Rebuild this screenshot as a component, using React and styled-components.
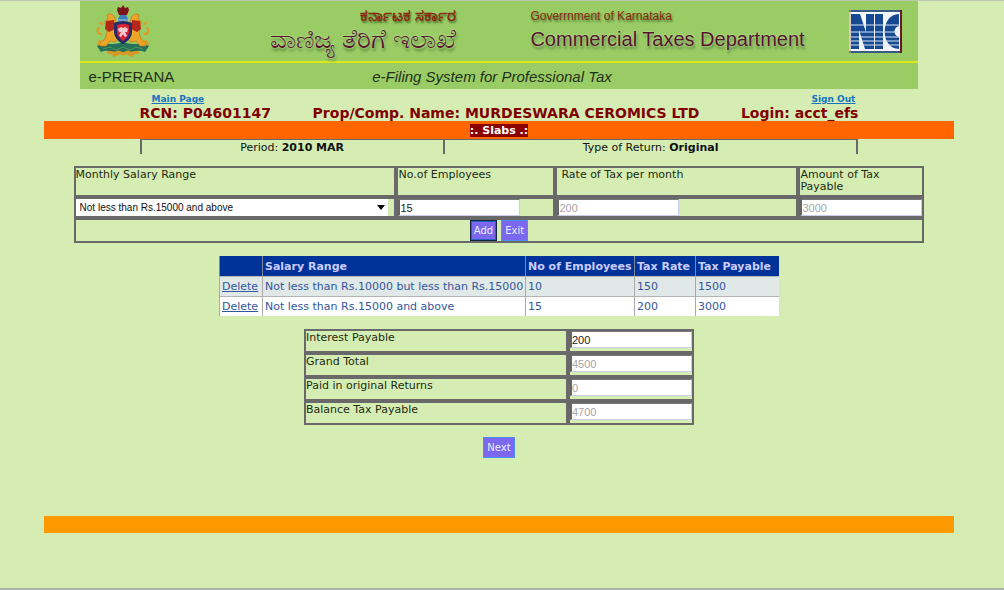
import React from 'react';
import styled, { createGlobalStyle } from 'styled-components';

const sans = `"DejaVu Sans", Verdana, sans-serif`;
const arial = `"Liberation Sans", Arial, sans-serif`;

const GlobalStyle = createGlobalStyle`
  * { box-sizing: border-box; }
  body { margin: 0; background: #d5edb3; color: #1d2b12; font-family: ${sans}; font-size: 11px; line-height: 13px; }
  button, input, select { font: inherit; }
`;

const Page = styled.div`
  min-height: 100vh;
  padding: 0 50px 0 44px;
  border-top: 1px solid #bcc6ae;
  border-bottom: 2px solid #aeb1aa;
  display: flex;
  flex-direction: column;
  align-items: center;
`;

const Banner = styled.header`
  width: 92%;
  background: #9acc66;
`;

const BannerTop = styled.div`
  display: flex;
  align-items: center;
  height: 60px;
  padding: 0 16px;
`;

const Titles = styled.div`
  display: flex;
  gap: 74px;
  margin: 0 44px 4px auto;
`;

const TitleBlock = styled.div`
  text-align: ${(p) => p.$align || 'left'};
  font-family: ${arial};
`;

const Government = styled.p`
  margin: 0;
  color: #8a2a10;
  font-size: ${(p) => p.$size || '12px'};
  font-weight: ${(p) => p.$weight || 400};
  line-height: 20px;
  white-space: nowrap;
  text-shadow: 1px 2px 2px #4d7a2e;
`;

const Department = styled.h1`
  margin: 0;
  color: #54142b;
  font-size: ${(p) => p.$size || '20px'};
  font-weight: 400;
  line-height: 26px;
  white-space: nowrap;
  text-shadow: 0 0 2px #d5edb3, 1px 3px 3px #56803a;
`;

const BannerStrip = styled.div`
  display: flex;
  gap: 198px;
  height: 28px;
  padding: 0 8px;
  border-top: 2px solid #dcea1c;
  align-items: center;
  color: #22301a;
  font-family: ${arial};
  font-size: 15px;
`;

const System = styled.em`
  font-style: italic;
`;

const Account = styled.section`
  width: 79%;
  padding-top: 5px;
`;

const AccountLinks = styled.nav`
  display: flex;
  justify-content: space-between;
  padding: 0 3px 0 12px;
  font-size: 9px;
  font-weight: 700;
  line-height: 11px;
`;

const SmallLink = styled.a`
  color: #1673c4;
`;

const AccountFacts = styled.div`
  display: flex;
  justify-content: space-between;
  color: #800000;
  font-size: 14px;
  font-weight: 700;
  line-height: 16px;
  white-space: nowrap;
`;

const Bar = styled.div`
  width: 100%;
  height: ${(p) => p.$height};
  background: ${(p) => p.$color};
  display: flex;
  align-items: center;
  justify-content: center;
  flex-shrink: 0;
`;

const BarTitle = styled.h2`
  margin: 0;
  background: #8b0000;
  color: #fff;
  font-size: 11px;
  line-height: 13px;
`;

const Period = styled.div`
  display: grid;
  grid-template-columns: 302fr 415fr;
  grid-template-rows: 14px;
  width: 79%;
  border: solid #696969;
  border-width: 1px 2px 0 2px;
  text-align: center;
  line-height: 16px;
`;

const PeriodCell = styled.div`
  color: #111;
  & + & { border-left: 2px solid #696969; }
`;

const FormTable = styled.table`
  width: ${(p) => p.$width};
  margin-top: ${(p) => p.$top};
  border-spacing: 0;
  table-layout: fixed;
`;

const Row = styled.tr`
  height: ${(p) => p.$height};
`;

const Cell = styled.td`
  padding: 0;
  border: 2px solid #696969;
  text-align: left;
  vertical-align: top;
`;

const HeadCell = styled.th`
  padding: 1px 0 0 ${(p) => p.$indent || '0'};
  border: 2px solid #696969;
  text-align: left;
  vertical-align: top;
  font-weight: 400;
  line-height: 12px;
`;

const Field = styled.input`
  display: block;
  width: 122px;
  max-width: 100%;
  height: 17px;
  padding: 0;
  border: solid;
  border-width: 1px 1px 1px 2px;
  border-color: #777 #c9cdea #c9cdea #666;
  background: #fff;
  color: #222;
  font-family: ${arial};
  font-size: 11px;
  &:disabled { color: #a5a5a5; }
`;

const SelectWrap = styled.div`
  display: flex;
  align-items: center;
  position: relative;
  width: 98%;
`;

const Select = styled.select`
  appearance: none;
  display: block;
  width: 100%;
  height: 17px;
  padding: 0 4px;
  border: 0;
  border-radius: 0;
  background: #fff;
  color: #111;
  font-family: ${arial};
  font-size: 10px;
`;

const Arrow = styled.svg`
  position: absolute;
  right: 3px;
  pointer-events: none;
`;

const Buttons = styled.div`
  display: flex;
  justify-content: center;
  gap: 4px;
`;

const Button = styled.button`
  height: 21px;
  padding: 0 3px;
  border: 1px solid ${(p) => (p.$active ? '#10243f' : '#4b8df0')};
  box-shadow: ${(p) => (p.$active ? 'inset 0 0 0 1px #2a62c0' : 'none')};
  background: #7b68ee;
  color: #e8f0ff;
  font-size: 10px;
  line-height: 17px;
`;

const Slabs = styled.table`
  width: 560px;
  margin-top: 13px;
  border-spacing: 0;
  table-layout: fixed;
  color: #33579b;
  white-space: nowrap;
`;

const SlabHead = styled.th`
  height: 20px;
  padding: 0 2px;
  border-left: 1px solid #8088a0;
  background: #003399;
  color: #ccccff;
  text-align: left;
`;

const SlabCell = styled.td`
  height: 20px;
  padding: 0 2px;
  border-left: 1px solid #a9a9a9;
  border-top: 1px solid #b4b4b4;
  background: ${(p) => p.$tint};
`;

const DeleteLink = styled.a`
  color: inherit;
`;

const NextArea = styled.div`
  margin: 12px 0 58px;
`;

function Emblem() {
  const lion = (
    <g>
      <path d="M19 13c-2-4-5-5-8-3l1 4c-3 1-4 4-2 6l1 7-2 7-5 4v3h6l4-5 5 1 5-4-4-9z" fill="#eda528" stroke="#c47519" strokeWidth=".7" />
      <path d="M10 16l8-1 1 9-6 3-4-3z" fill="#b5271a" />
      <path d="M3 22c-3 4-1 7 3 7M6 36c-4 0-4 2-4 4M3 17l4 3" fill="none" stroke="#e09b20" strokeWidth="2" />
    </g>
  );
  return (
    <svg width="54" height="53" viewBox="0 0 54 53" role="img" aria-label="Karnataka emblem">
      <path d="M1 41c8-4 15 0 26-4 11 4 18 0 26 4l-4 6c-8-4-14 3-22 0-8 3-14-4-22 0z" fill="#24705a" />
      <path d="M7 44l7-2 6 3 7-3 7 3 6-3 7 2" fill="none" stroke="#4c9a55" strokeWidth="1" />
      {lion}
      <g transform="translate(54 0) scale(-1 1)">{lion}</g>
      <path d="M22 2l3 1 2-3 2 3 3-1 1 3-2 5h-8l-2-5z" fill="#7c1519" />
      <path d="M24 10h6l2 4v2H22v-2z" fill="#3c7cc0" />
      <path d="M21 15h12" stroke="#a6c7de" strokeWidth="1" />
      <path d="M18 18q9-4 18 0v10q-1 7-9 11-8-4-9-11z" fill="#292b69" />
      <path d="M21 20q6-2 12 0v8q-1 4-6 8-5-4-6-8z" fill="#dc2436" />
      <path d="M22 24l3-2 2 1 2-1 3 2-1 3h-2l2 4-2 1-2-3-2 3-2-1 2-4h-2z" fill="#f1ccd5" />
      <path d="M11 48c4-2 6 2 11-1l5 2 5-2c5 3 7-1 11 1M17 51l6-3M37 51l-6-3" fill="none" stroke="#d99821" strokeWidth="3" />
    </svg>
  );
}

function NicLogo() {
  return (
    <svg width="53" height="43" viewBox="0 0 53 43" role="img" aria-label="NIC">
      <path d="M0 0h53v43H0z" fill="#f5f7fc" />
      <path d="M2 4h9l6 18V4h8v35h-9L10 20v19H2zM26 4h8v35h-8zM50 4v12c-6 1-6 10 0 11v12c-19 0-19-35 0-35z" fill="#154a92" />
      <path d="M1 15h49" stroke="#dbe5f3" strokeWidth="1" />
      <path d="M1 22h49M1 27h49M1 31h49M1 35h49" stroke="#dbe5f3" strokeWidth="1" />
      <path d="M0 1h53M0 42h53" stroke="#355b84" strokeWidth="2" />
      <path d="M1 0v43" stroke="#c49b8a" strokeWidth="1" />
      <path d="M52 0v43" stroke="#6b1722" strokeWidth="2" />
    </svg>
  );
}

const slabs = [
  { range: 'Not less than Rs.10000 but less than Rs.15000', employees: 10, rate: 150, payable: 1500, tint: '#e0e8e8' },
  { range: 'Not less than Rs.15000 and above', employees: 15, rate: 200, payable: 3000, tint: '#ffffff' },
];

const totals = [
  { id: 'interest', label: 'Interest Payable', value: '200', editable: true },
  { id: 'grand', label: 'Grand Total', value: '4500' },
  { id: 'paid', label: 'Paid in original Returns', value: '0' },
  { id: 'balance', label: 'Balance Tax Payable', value: '4700' },
];

export default function App() {
  return (
    <Page>
      <GlobalStyle />
      <Banner>
        <BannerTop>
          <Emblem />
          <Titles>
            <TitleBlock $align="right" lang="kn">
              <Government $size="17px" $weight={700}>ಕರ್ನಾಟಕ ಸರ್ಕಾರ</Government>
              <Department as="p" $size="26px">ವಾಣಿಜ್ಯ ತೆರಿಗೆ ಇಲಾಖೆ</Department>
            </TitleBlock>
            <TitleBlock>
              <Government>Goverrnment of Karnataka</Government>
              <Department>Commercial Taxes Department</Department>
            </TitleBlock>
          </Titles>
          <NicLogo />
        </BannerTop>
        <BannerStrip>
          <span>e-PRERANA</span>
          <System>e-Filing System for Professional Tax</System>
        </BannerStrip>
      </Banner>

      <Account>
        <AccountLinks>
          <SmallLink href="#main">Main Page</SmallLink>
          <SmallLink href="#signout">Sign Out</SmallLink>
        </AccountLinks>
        <AccountFacts>
          <span>RCN: P04601147</span>
          <span>Prop/Comp. Name: MURDESWARA CEROMICS LTD</span>
          <span>Login: acct_efs</span>
        </AccountFacts>
      </Account>

      <Bar $height="18px" $color="#ff6600"><BarTitle>:. Slabs .:</BarTitle></Bar>

      <Period>
        <PeriodCell>Period: <b>2010 MAR</b></PeriodCell>
        <PeriodCell>Type of Return: <b>Original</b></PeriodCell>
      </Period>

      <FormTable $width="93.5%" $top="12px">
        <colgroup>
          <col /><col width="159" /><col width="243" /><col width="126" />
        </colgroup>
        <tbody>
          <Row $height="31px">
            <HeadCell><label htmlFor="range">Monthly Salary Range</label></HeadCell>
            <HeadCell><label htmlFor="employees">No.of Employees</label></HeadCell>
            <HeadCell $indent="4px"><label htmlFor="rate">Rate of Tax per month</label></HeadCell>
            <HeadCell><label htmlFor="amount">Amount of Tax Payable</label></HeadCell>
          </Row>
          <Row $height="21px">
            <Cell>
              <SelectWrap>
                <Select id="range"><option>Not less than Rs.15000 and above</option></Select>
                <Arrow width="8" height="5" viewBox="0 0 8 5"><path d="M0 0h8L4 5z" fill="#000" /></Arrow>
              </SelectWrap>
            </Cell>
            <Cell><Field id="employees" defaultValue="15" /></Cell>
            <Cell><Field id="rate" defaultValue="200" disabled /></Cell>
            <Cell><Field id="amount" defaultValue="3000" disabled /></Cell>
          </Row>
          <Row $height="25px">
            <Cell colSpan={4}>
              <Buttons>
                <Button type="button" $active>Add</Button>
                <Button type="button">Exit</Button>
              </Buttons>
            </Cell>
          </Row>
        </tbody>
      </FormTable>

      <Slabs>
        <colgroup>
          <col width="43" /><col width="263" /><col width="109" /><col width="61" /><col />
        </colgroup>
        <thead>
          <tr>
            <SlabHead aria-label="Action" />
            <SlabHead>Salary Range</SlabHead>
            <SlabHead>No of Employees</SlabHead>
            <SlabHead>Tax Rate</SlabHead>
            <SlabHead>Tax Payable</SlabHead>
          </tr>
        </thead>
        <tbody>
          {slabs.map((s) => (
            <tr key={s.range}>
              <SlabCell $tint={s.tint}><DeleteLink href="#delete">Delete</DeleteLink></SlabCell>
              <SlabCell $tint={s.tint}>{s.range}</SlabCell>
              <SlabCell $tint={s.tint}>{s.employees}</SlabCell>
              <SlabCell $tint={s.tint}>{s.rate}</SlabCell>
              <SlabCell $tint={s.tint}>{s.payable}</SlabCell>
            </tr>
          ))}
        </tbody>
      </Slabs>

      <FormTable $width="390px" $top="13px">
        <colgroup><col /><col width="126" /></colgroup>
        <tbody>
          {totals.map((t) => (
            <Row $height="24px" key={t.id}>
              <HeadCell><label htmlFor={t.id}>{t.label}</label></HeadCell>
              <Cell><Field id={t.id} defaultValue={t.value} disabled={!t.editable} /></Cell>
            </Row>
          ))}
        </tbody>
      </FormTable>

      <NextArea><Button type="button">Next</Button></NextArea>

      <Bar as="footer" $height="17px" $color="#ff9900" />
    </Page>
  );
}
